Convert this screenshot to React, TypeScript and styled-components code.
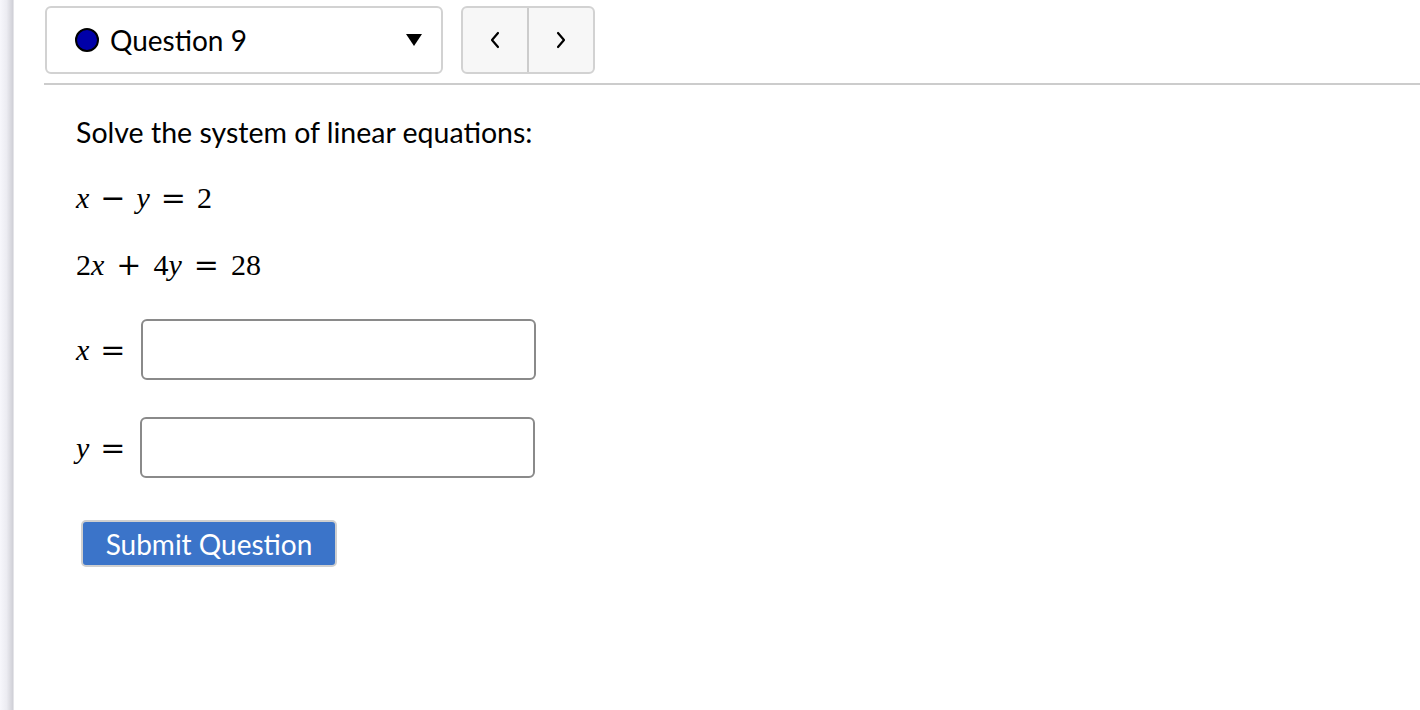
import React from 'react'
import { styled, createGlobalStyle } from 'styled-components';

const GlobalStyle = createGlobalStyle`
	html, body {
		margin: 0;
		padding: 0;
		background: #ffffff;
	}
	body {
		font-family: Lato, "Open Sans", sans-serif;
		color: #000000;
	}
`

const Page = styled.div`
	display: flex;
	min-height: 710px;
`
const SideStrip = styled.div`
	width: 13px;
	flex-shrink: 0;
	background: linear-gradient(to right, #f7f7fc 0%, #ececf2 50%, #cfcfd6 100%);
	border-right: 1px solid #e4e4e8;
`
const Main = styled.main`
	flex: 1;
	padding: 6px 0 0 30px;
`
const Header = styled.div`
	display: flex;
	align-items: center;
	gap: 18px;
	padding-left: 1px;
`
const QuestionSelect = styled.div`
	box-sizing: border-box;
	width: 398px;
	height: 68px;
	border: 2px solid #d2d2d2;
	border-radius: 6px;
	display: flex;
	align-items: center;
	padding: 0 19px 0 28px;
	font-size: 28px;
`
const StatusDot = styled.span<{ $color: string }>`
	box-sizing: border-box;
	width: 24px;
	height: 24px;
	border-radius: 50%;
	background: ${({ $color }) => $color};
	border: 2px solid #000000;
	margin-right: 11px;
	flex-shrink: 0;
`
const QuestionLabel = styled.span`
	flex: 1;
`
const Caret = styled.span`
	width: 0;
	height: 0;
	border-left: 8px solid transparent;
	border-right: 8px solid transparent;
	border-top: 12px solid #000000;
`
const NavGroup = styled.div`
	box-sizing: border-box;
	width: 134px;
	height: 68px;
	border: 2px solid #d2d2d2;
	border-radius: 6px;
	background: #f7f7f7;
	display: flex;
	overflow: hidden;
`
const NavButton = styled.button<{ $divider?: boolean }>`
	flex: 1;
	border: none;
	border-left: ${({ $divider }) => $divider ? '2px solid #cccccc' : 'none'};
	background: transparent;
	display: flex;
	align-items: center;
	justify-content: center;
	padding: 0;
	cursor: pointer;
`
const Rule = styled.div`
	margin-top: 9px;
	height: 2px;
	background: #cccccc;
`
const Content = styled.div`
	padding: 0 0 0 32px;
`
const Prompt = styled.p`
	margin: 31px 0 0 0;
	font-size: 28.5px;
	line-height: 32px;
`
const MathLine = styled.div<{ $top: number }>`
	margin-top: ${({ $top }) => $top}px;
	font-family: "Liberation Serif", "DejaVu Serif", serif;
	font-size: 30px;
	line-height: 34px;
	display: flex;
	align-items: baseline;
`
const Var = styled.span`
	font-style: italic;
`
const Op = styled.span<{ $space: number }>`
	font-family: "DejaVu Serif", serif;
	margin: 0 ${({ $space }) => $space}px;
`
const AnswerRow = styled.div<{ $top: number }>`
	margin-top: ${({ $top }) => $top}px;
	display: flex;
	align-items: center;
`
const AnswerLabel = styled.div<{ $gap: number }>`
	font-family: "Liberation Serif", "DejaVu Serif", serif;
	font-size: 30px;
	display: flex;
	align-items: baseline;
	margin-right: ${({ $gap }) => $gap}px;
	${Op} {
		margin-right: 0;
	}
`
const AnswerInput = styled.input`
	box-sizing: border-box;
	width: 395px;
	height: 61px;
	border: 2px solid #8a8a8a;
	border-radius: 6px;
	font-size: 24px;
	padding: 0 10px;
	outline: none;
`
const SubmitButton = styled.button`
	margin: 42px 0 0 5px;
	box-sizing: border-box;
	width: 256px;
	height: 47px;
	background: #3b74c9;
	color: #ffffff;
	border: 2px solid #cfcfcf;
	border-radius: 5px;
	font-family: Lato, "Open Sans", sans-serif;
	font-size: 28px;
	padding: 0;
	cursor: pointer;
`

const Chevron = ({ dir }: { dir: 'left' | 'right' }) => (
	<svg width="12" height="20" viewBox="0 0 12 20">
		<path d={dir === 'left' ? 'M9 3 L3 10 L9 17' : 'M3 3 L9 10 L3 17'}
			fill="none" stroke="#000" strokeWidth="2.2" strokeLinecap="round" strokeLinejoin="round" />
	</svg>
)

const App = () => {
	return (
		<>
			<GlobalStyle />
			<Page>
				<SideStrip />
				<Main>
					<Header>
						<QuestionSelect>
							<StatusDot $color="#0000a8" />
							<QuestionLabel>Question 9</QuestionLabel>
							<Caret />
						</QuestionSelect>
						<NavGroup>
							<NavButton aria-label="previous"><Chevron dir="left" /></NavButton>
							<NavButton $divider aria-label="next"><Chevron dir="right" /></NavButton>
						</NavGroup>
					</Header>
					<Rule />
					<Content>
						<Prompt>Solve the system of linear equations:</Prompt>
						<MathLine $top={33}>
							<Var>x</Var>
							<Op $space={11}>−</Op>
							<Var>y</Var>
							<Op $space={11}>=</Op>
							<span>2</span>
						</MathLine>
						<MathLine $top={33}>
							<span>2</span><Var>x</Var>
							<Op $space={12}>+</Op>
							<span>4</span><Var>y</Var>
							<Op $space={12}>=</Op>
							<span>28</span>
						</MathLine>
						<AnswerRow $top={37}>
							<AnswerLabel $gap={16}><Var>x</Var><Op $space={11}>=</Op></AnswerLabel>
							<AnswerInput type="text" />
						</AnswerRow>
						<AnswerRow $top={37}>
							<AnswerLabel $gap={15}><Var>y</Var><Op $space={11}>=</Op></AnswerLabel>
							<AnswerInput type="text" />
						</AnswerRow>
						<SubmitButton>Submit Question</SubmitButton>
					</Content>
				</Main>
			</Page>
		</>
	);
};

export default App
